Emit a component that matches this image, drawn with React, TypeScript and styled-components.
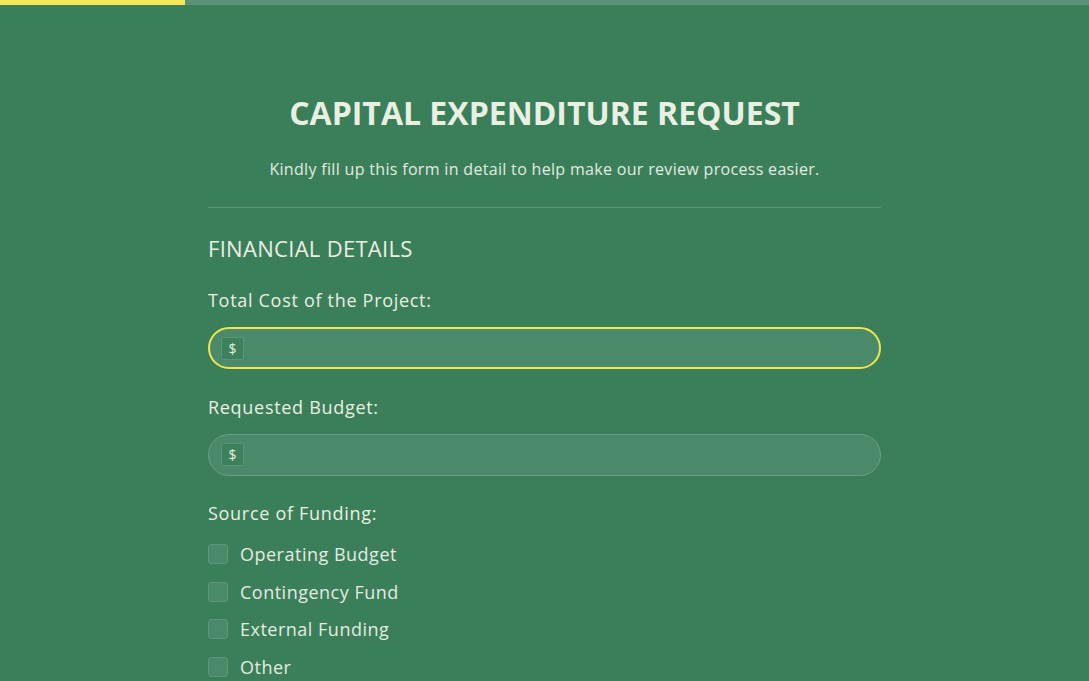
import React from 'react';
import styled, { createGlobalStyle } from 'styled-components';

const GlobalStyle = createGlobalStyle`
  html, body {
    margin: 0;
    padding: 0;
    background-color: #3a7f5a;
    font-family: "Open Sans", "Liberation Sans", sans-serif;
    color: #e9efe6;
  }
  * { box-sizing: border-box; }
`;

const Page = styled.div`
  min-height: 681px;
  background-color: #3a7f5a;
`;

const Progress = styled.div`
  height: 5px;
  background-color: #5a9377;
  display: flex;
`;

const ProgressFill = styled.div`
  height: 100%;
  background-color: #f5e854;
`;

const Form = styled.form`
  width: 673px;
  margin: 0 auto;
  padding-top: 84px;
`;

const Header = styled.header`
  text-align: center;
  padding-bottom: 26px;
  border-bottom: 1px solid #5b9577;
`;

const Title = styled.h1`
  margin: 0;
  font-size: 32px;
  font-weight: 700;
  line-height: 48px;
  color: #eaefe4;
`;

const Subtitle = styled.p`
  margin: 20px 0 0;
  font-size: 16px;
  letter-spacing: 0.32px;
  line-height: 24px;
  color: #e4ebe1;
`;

const Section = styled.section`
  padding-top: 24px;
`;

const SectionTitle = styled.h2`
  margin: 0 0 23px;
  font-size: 22px;
  font-weight: 400;
  letter-spacing: 0.3px;
  line-height: 32px;
  color: #eaefe4;
`;

const Field = styled.div`
  margin-bottom: 24.5px;
`;

const Label = styled.label<{ gap?: number }>`
  display: block;
  font-size: 18px;
  font-weight: 500;
  letter-spacing: 0.7px;
  line-height: 26px;
  margin-bottom: ${p => p.gap ?? 14}px;
  color: #eaefe4;
`;

const InputWrap = styled.div<{ focused?: boolean }>`
  height: 42px;
  border-radius: 21px;
  background-color: #4a8a6a;
  border: ${p => (p.focused ? '2px solid #f2e64c' : '1px solid #6a9f83')};
  display: flex;
  align-items: center;
  padding-left: ${p => (p.focused ? '11px' : '12px')};
`;

const Prefix = styled.span`
  width: 23px;
  height: 23px;
  display: flex;
  align-items: center;
  justify-content: center;
  background-color: #3c805c;
  border: 1px solid #5b9577;
  border-radius: 2px;
  font-size: 14px;
  color: #e9efe6;
`;

const Input = styled.input`
  flex: 1;
  height: 100%;
  border: none;
  background: transparent;
  outline: none;
  padding: 0 10px;
  font-family: inherit;
  font-size: 16px;
  color: #eaefe4;
`;

const Options = styled.div`
  display: flex;
  flex-direction: column;
  gap: 11.7px;
`;

const Option = styled.label`
  display: flex;
  align-items: center;
  gap: 12px;
  font-size: 18px;
  letter-spacing: 0.5px;
  line-height: 26px;
  color: #e4ebe1;
`;

const Box = styled.span`
  width: 20px;
  height: 20px;
  border-radius: 3px;
  background-color: #4a8a6a;
  border: 1px solid #5e977a;
`;

const funding = ['Operating Budget', 'Contingency Fund', 'External Funding', 'Other'];

export default function App() {
  return (
    <Page>
      <GlobalStyle />
      <Progress>
        <ProgressFill style={{ width: '17%' }} />
      </Progress>
      <Form>
        <Header>
          <Title>CAPITAL EXPENDITURE REQUEST</Title>
          <Subtitle>Kindly fill up this form in detail to help make our review process easier.</Subtitle>
        </Header>
        <Section>
          <SectionTitle>FINANCIAL DETAILS</SectionTitle>
          <Field>
            <Label>Total Cost of the Project:</Label>
            <InputWrap focused>
              <Prefix>$</Prefix>
              <Input />
            </InputWrap>
          </Field>
          <Field>
            <Label>Requested Budget:</Label>
            <InputWrap>
              <Prefix>$</Prefix>
              <Input />
            </InputWrap>
          </Field>
          <Field>
            <Label gap={15}>Source of Funding:</Label>
            <Options>
              {funding.map(f => (
                <Option key={f}>
                  <Box />
                  {f}
                </Option>
              ))}
            </Options>
          </Field>
        </Section>
      </Form>
    </Page>
  );
}
